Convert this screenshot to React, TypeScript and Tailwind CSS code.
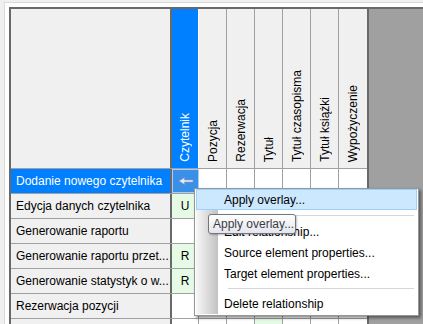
import React from 'react'

const columns = ['Pozycja', 'Rezerwacja', 'Tytuł', 'Tytuł czasopisma', 'Tytuł książki', 'Wypożyczenie']

type Row = { name: string; czytelnik?: string; green?: number[] }

// last row only shows its top edge
const rows: Row[] = [
  { name: 'Dodanie nowego czytelnika', czytelnik: 'arrow' },
  { name: 'Edycja danych czytelnika', czytelnik: 'U' },
  { name: 'Generowanie raportu' },
  { name: 'Generowanie raportu przet...', czytelnik: 'R' },
  { name: 'Generowanie statystyk o w...', czytelnik: 'R' },
  { name: 'Rezerwacja pozycji' },
  { name: '', green: [2] },
]

const ArrowLeft = () => (
  <svg width="16" height="8" viewBox="0 0 16 8">
    <path d="M1 4 L6.5 0.6 L6.5 2.9 L15 2.9 L15 5.1 L6.5 5.1 L6.5 7.4 Z" fill="#e4e9f2" stroke="#7f97bd" strokeWidth="0.6" />
  </svg>
)

const HeaderRow = () => (
  <div className="flex shrink-0 h-[160px] border-b border-[#a0a0a0]">
    <div className="w-[161px] bg-[#f0f0f0] border-r-2 border-[#696969]" />
    <div className="w-[27px] bg-[#0080ff] border-r border-white flex items-end justify-center pb-[6px]">
      <span className="[writing-mode:vertical-rl] rotate-180 text-white text-[12px] leading-none">Czytelnik</span>
    </div>
    {columns.map((c, i) => (
      <div
        key={c}
        className={
          i === columns.length - 1
            ? 'w-[28px] bg-[#f0f0f0] flex items-end justify-center pb-[6px]'
            : 'w-[28px] bg-[#f0f0f0] border-r border-[#a0a0a0] flex items-end justify-center pb-[6px]'
        }
      >
        <span className="[writing-mode:vertical-rl] rotate-180 text-black text-[12px] leading-none whitespace-nowrap">{c}</span>
      </div>
    ))}
  </div>
)

const BodyRow = ({ row, index }: { row: Row; index: number }) => {
  const selected = index === 0
  return (
    <div className="flex shrink-0 h-[25px] border-b border-[#a0a0a0]">
      <div
        className={
          selected
            ? 'w-[161px] bg-[#0080ff] text-white border-r-2 border-[#696969] pl-[5px] flex items-center text-[12px] whitespace-nowrap overflow-hidden'
            : 'w-[161px] bg-[#f0f0f0] text-black border-r-2 border-[#696969] pl-[5px] flex items-center text-[12px] whitespace-nowrap overflow-hidden'
        }
      >
        {row.name}
      </div>
      {/* czytelnik cell */}
      {row.czytelnik === 'arrow' ? (
        <div className="w-[27px] bg-[#3a8fe8] border border-[#a6cff8] flex items-center justify-center">
          <ArrowLeft />
        </div>
      ) : row.czytelnik ? (
        <div className="w-[27px] bg-[#e6fbe6] border-r border-[#a0a0a0] flex items-center justify-center text-[12px] text-black">
          {row.czytelnik}
        </div>
      ) : (
        <div className="w-[27px] bg-white border-r border-[#a0a0a0]" />
      )}
      {columns.map((c, i) => (
        <div
          key={c}
          className={
            (row.green?.includes(i) ? 'bg-[#e6fbe6] ' : 'bg-white ') +
            (i === columns.length - 1 ? 'w-[28px]' : 'w-[28px] border-r border-[#a0a0a0]')
          }
        />
      ))}
    </div>
  )
}

const MenuItem = ({ label, active }: { label: string; active?: boolean }) => (
  <div
    className={
      active
        ? 'h-[21px] mx-[1px] border border-[#99d1ff] bg-[#cce8ff] pl-[27px] flex items-center text-[12px] text-black relative'
        : 'h-[21px] mx-[1px] border border-transparent pl-[27px] flex items-center text-[12px] text-black relative'
    }
  >
    {label}
  </div>
)

const Separator = ({ h }: { h: string }) => (
  <div className={h + ' flex items-center pl-[33px] pr-[4px] relative'}>
    <div className="w-full h-[1px] bg-[#d7d7d7]" />
  </div>
)

const ContextMenu = () => (
  <div className="absolute left-[194px] top-[188px] w-[225px] h-[128px] bg-white border border-[#979797] shadow-[2px_2px_3px_rgba(0,0,0,0.45)]">
    {/* gutter */}
    <div className="absolute left-[1px] top-[1px] bottom-[1px] w-[22px] bg-gradient-to-r from-[#f7f7f7] to-[#c2c2c2]" />
    <MenuItem label="Apply overlay..." active />
    <Separator h="h-[11px]" />
    <MenuItem label="Edit relationship..." />
    <MenuItem label="Source element properties..." />
    <MenuItem label="Target element properties..." />
    <Separator h="h-[9px]" />
    <MenuItem label="Delete relationship" />
  </div>
)

const Tooltip = () => (
  <div className="absolute left-[208px] top-[214px] w-[88px] h-[20px] rounded-[3px] border border-[#767676] bg-gradient-to-b from-white to-[#e4e5f0] shadow-[1px_1px_2px_rgba(0,0,0,0.25)] pl-[4px] flex items-center text-[12px] text-[#3c3c3c] whitespace-nowrap">
    Apply overlay...
  </div>
)

export default function App() {
  return (
    <div className="w-[423px] h-[324px] overflow-hidden bg-[#f0f0f0] relative font-['Liberation_Sans',Arial,sans-serif]">
      <div className="ml-[4px] mt-[2px] h-full border-l border-t border-[#dadada] bg-white pl-[4px] pt-[4px]">
        <div className="h-full flex border-l-2 border-t-2 border-[#696969]">
          {/* grid */}
          <div className="flex flex-col">
            <HeaderRow />
            {rows.map((r, i) => <BodyRow key={i} row={r} index={i} />)}
          </div>
          {/* empty area */}
          <div className="flex-1 bg-[#a0a0a0] border-l-2 border-[#696969]" />
        </div>
      </div>
      <ContextMenu />
      <Tooltip />
    </div>
  )
}
